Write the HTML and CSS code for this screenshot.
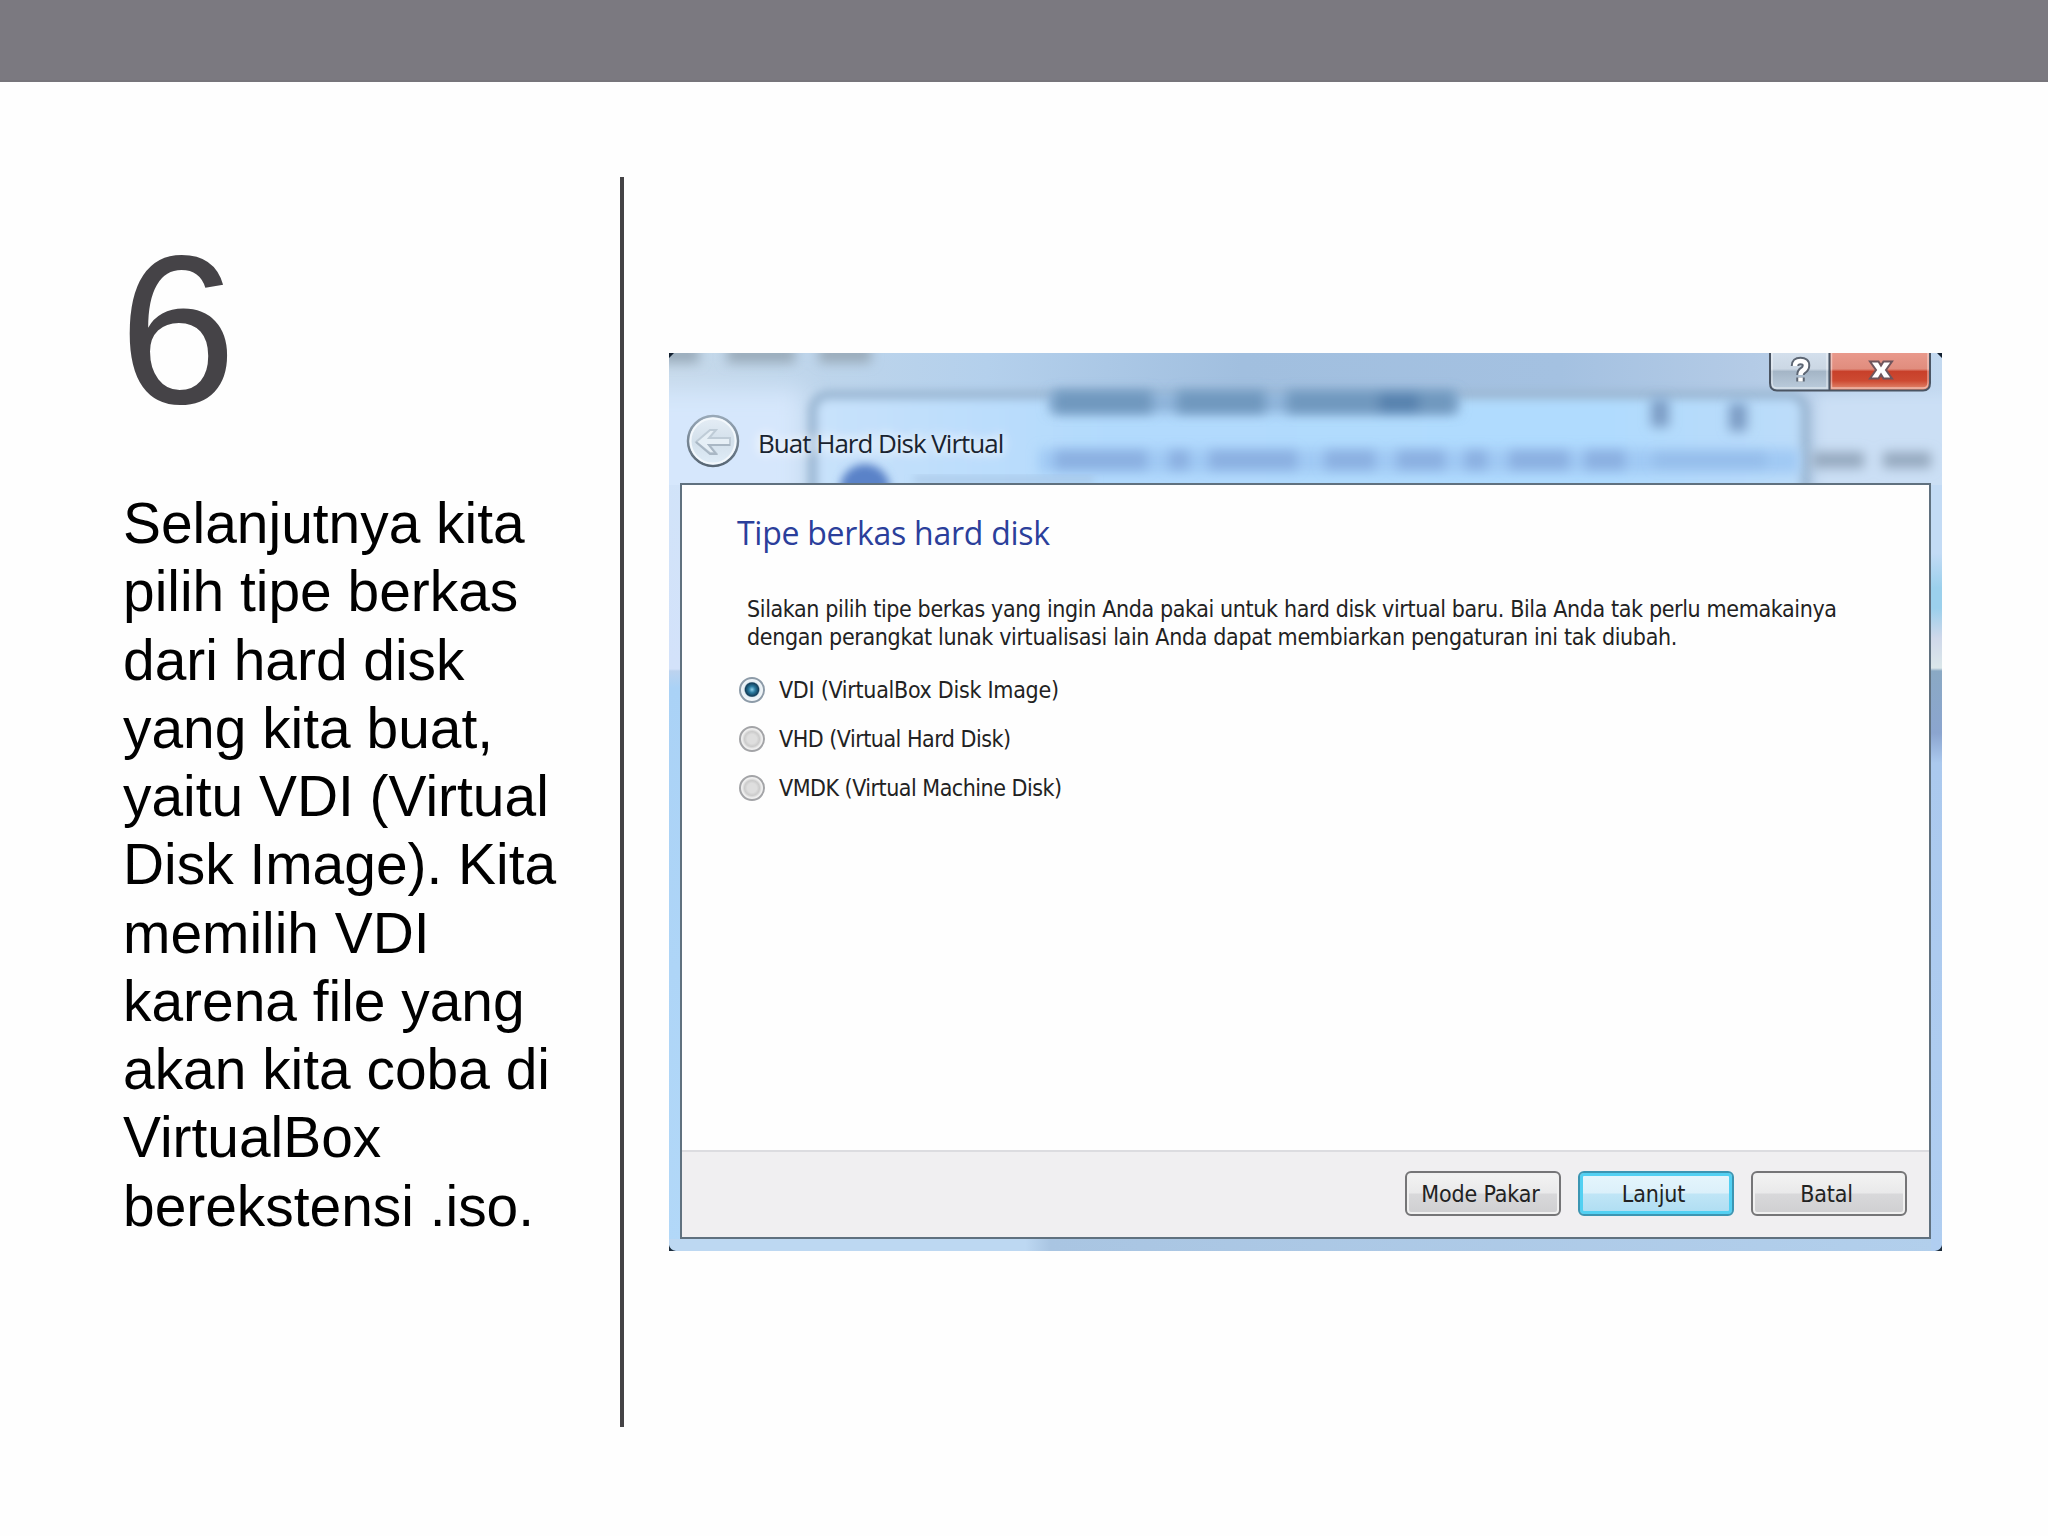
FILE: index.html
```
<!DOCTYPE html>
<html lang="id">
  <head>
    <meta charset="utf-8">
    <meta name="viewport" content="width=device-width, initial-scale=1.0">
    <title>Buat Hard Disk Virtual</title>
    <link rel="stylesheet" href="styles.css">
  </head>
  <body>
    <div class="topbar"></div>
    <div class="slide">
      <div class="text">
        <h1>6</h1>
        <p>Selanjutnya kita pilih tipe berkas dari hard disk yang kita buat, yaitu VDI (Virtual Disk Image). Kita memilih VDI karena file yang akan kita coba di VirtualBox berekstensi .iso.</p>
      </div>
      <div class="line"></div>
      <div class="window">
        <!-- aero glass with the blurred window behind it -->
        <svg class="glass" viewBox="0 0 1273 132" width="1273" height="132">
          <defs>
            <linearGradient id="base" x1="0" x2="1" y1="0" y2="0">
              <stop offset="0" stop-color="#c6d9ea"/>
              <stop offset=".25" stop-color="#b4d0ec"/>
              <stop offset=".45" stop-color="#a1bfdf"/>
              <stop offset=".7" stop-color="#a4c1e1"/>
              <stop offset=".85" stop-color="#b4cbe6"/>
              <stop offset="1" stop-color="#c3d9f0"/>
            </linearGradient>
            <linearGradient id="inner" x1="0" x2="1" y1="0" y2="0">
              <stop offset="0" stop-color="#c8e2fb"/>
              <stop offset=".3" stop-color="#b2dafd"/>
              <stop offset=".8" stop-color="#b0dbfe"/>
              <stop offset="1" stop-color="#bcdcf9"/>
            </linearGradient>
            <filter id="b4" x="-20%" y="-50%" width="140%" height="200%"><feGaussianBlur stdDeviation="4"/></filter>
            <filter id="b6" x="-50%" y="-150%" width="200%" height="400%"><feGaussianBlur stdDeviation="6"/></filter>
            <filter id="b12" x="-50%" y="-50%" width="200%" height="200%"><feGaussianBlur stdDeviation="12"/></filter>
          </defs>
          <rect width="1273" height="132" fill="url(#base)"/>
          <rect x="-30" y="36" width="165" height="130" fill="#d6e7fc" filter="url(#b12)"/>
          <rect x="1148" y="42" width="160" height="110" fill="#cbdff5" filter="url(#b6)"/>
          <g fill="#9aabba" filter="url(#b6)">
            <rect x="-10" y="-8" width="40" height="18"/>
            <rect x="58" y="-8" width="68" height="18"/>
            <rect x="150" y="-8" width="52" height="18"/>
          </g>
          <rect x="144" y="42" width="992" height="130" rx="16" fill="url(#inner)" stroke="#9db9d5" stroke-width="10" filter="url(#b4)"/>
          <path d="M1137 50V140" stroke="#94abc4" stroke-width="12" filter="url(#b4)"/>
          <rect x="380" y="40" width="410" height="20" fill="#8db3d9" filter="url(#b6)"/>
          <g fill="#7097bd" filter="url(#b6)">
            <rect x="385" y="38" width="98" height="22"/>
            <rect x="508" y="38" width="88" height="22"/>
            <rect x="618" y="38" width="168" height="22"/>
            <rect x="710" y="40" width="40" height="20" fill="#5781ad"/>
          </g>
          <rect x="370" y="96" width="760" height="24" fill="#a0c9f4" filter="url(#b6)"/>
          <g fill="#8aafe0" filter="url(#b6)">
            <rect x="386" y="98" width="92" height="18"/>
            <rect x="500" y="98" width="20" height="18"/>
            <rect x="540" y="98" width="88" height="18"/>
            <rect x="656" y="98" width="50" height="18"/>
            <rect x="728" y="98" width="48" height="18"/>
            <rect x="796" y="98" width="22" height="18"/>
            <rect x="840" y="98" width="60" height="18"/>
            <rect x="916" y="98" width="40" height="18"/>
            <rect x="985" y="100" width="112" height="14" opacity=".5"/>
          </g>
          <g fill="#94a8be" filter="url(#b6)">
            <rect x="1143" y="99" width="52" height="16"/>
            <rect x="1214" y="99" width="48" height="16"/>
          </g>
          <g fill="#7b9cc4" filter="url(#b6)">
            <rect x="982" y="46" width="18" height="28"/>
            <rect x="1060" y="50" width="18" height="28"/>
          </g>
          <circle cx="196" cy="136" r="25" fill="#5a82c8" filter="url(#b4)"/>
          <rect x="245" y="124" width="180" height="5" fill="#a3c0e0" filter="url(#b4)"/>
          <path d="M0 0h5L0 5zM1273 0h-5l5 5z" fill="#122030"/>
        </svg>
        <div class="caption">
          <svg width="162" height="39" viewBox="0 0 162 39">
            <defs>
              <linearGradient id="help" x1="0" x2="0" y1="0" y2="1">
                <stop offset="0" stop-color="#d3dfec"/>
                <stop offset=".43" stop-color="#cbd7e4"/>
                <stop offset=".5" stop-color="#a4b5c6"/>
                <stop offset="1" stop-color="#bccddd"/>
              </linearGradient>
              <linearGradient id="close" x1="0" x2="0" y1="0" y2="1">
                <stop offset="0" stop-color="#e9998c"/>
                <stop offset=".43" stop-color="#e08d7e"/>
                <stop offset=".5" stop-color="#c8402a"/>
                <stop offset=".75" stop-color="#cd4a32"/>
                <stop offset="1" stop-color="#e58f74"/>
              </linearGradient>
            </defs>
            <path d="M1 0V30Q1 37 8 37H60V0z" fill="url(#help)"/>
            <path d="M60 0V37H154Q161 37 161 30V0z" fill="url(#close)"/>
            <path d="M3 0V30Q3 35 8 35H58V0M62.500 0V35H154Q159 35 159 30V0" fill="none" stroke="#fff" stroke-opacity=".45" stroke-width="1.500"/>
            <path d="M1 0V30Q1 37.500 8 37.500H154Q161 37.500 161 30V0M60.500 0V37" fill="none" stroke="#4b5563" stroke-width="2"/>
            <path d="M26 13Q26 8 31.500 8T37 12.500Q37 15.500 34 17.500Q31.500 19 31.500 22M31.500 24.500V28.500" fill="none" stroke="#5d6673" stroke-width="8.500"/>
            <path d="M26 13Q26 8 31.500 8T37 12.500Q37 15.500 34 17.500Q31.500 19 31.500 22M31.500 24.500V28.500" fill="none" stroke="#fff" stroke-width="4.500"/>
            <path d="M101 8.500h8.500l2.500 4 2.500-4h8.500l-6 8.500 6 8.500h-8.500l-2.500-4-2.500 4h-8.500l6-8.500z" fill="#fff" stroke="#6f555c" stroke-width="2"/>
          </svg>
        </div>
        <div class="title">
          <svg width="56" height="56" viewBox="0 0 56 56">
            <defs>
              <linearGradient id="back" x1="0" x2="0" y1="0" y2="1">
                <stop offset="0" stop-color="#e6eef6"/>
                <stop offset=".5" stop-color="#d3e0eb"/>
                <stop offset="1" stop-color="#e0edf8"/>
              </linearGradient>
              <linearGradient id="ring" x1="0" x2="0" y1="0" y2="1">
                <stop offset="0" stop-color="#98a8b7"/>
                <stop offset="1" stop-color="#586673"/>
              </linearGradient>
            </defs>
            <circle cx="28" cy="28" r="25" fill="url(#back)" stroke="url(#ring)" stroke-width="2.500"/>
            <circle cx="28" cy="28" r="22.500" fill="none" stroke="#f3f8fc" stroke-width="2"/>
            <path d="M11 29L25 17h6l-7 8h21v7H24l7 8h-6z" fill="#e6eff6" stroke="#bfccd7" stroke-width="2"/>
            <path d="M11 29L25 41h6l-7-9h21" fill="none" stroke="#a9b7c4" stroke-width="2"/>
          </svg>
          <span>Buat Hard Disk Virtual</span>
        </div>
        <div class="panel">
          <div class="content">
            <h2>Tipe berkas hard disk</h2>
            <p><span class="l1">Silakan pilih tipe berkas yang ingin Anda pakai untuk hard disk virtual baru. Bila Anda tak perlu memakainya</span><br><span class="l2">dengan perangkat lunak virtualisasi lain Anda dapat membiarkan pengaturan ini tak diubah.</span></p>
            <div class="options">
              <div class="option selected"><i class="radio checked"></i><span>VDI (VirtualBox Disk Image)</span></div>
              <div class="option"><i class="radio"></i><span>VHD (Virtual Hard Disk)</span></div>
              <div class="option"><i class="radio"></i><span>VMDK (Virtual Machine Disk)</span></div>
            </div>
          </div>
          <div class="buttons">
            <button>Mode Pakar</button>
            <button class="default">Lanjut</button>
            <button>Batal</button>
          </div>
        </div>
        <svg class="corners" viewBox="0 0 1273 6" width="1273" height="6">
          <path d="M0 0Q1 5 7 6H0zM1273 0Q1272 5 1266 6h7z" fill="#1c2c3c"/>
        </svg>
      </div>
    </div>
  </body>
</html>
```
FILE: styles.css
```
* {
  box-sizing: border-box;
}
body {
  margin: 0;
  height: 1536px;
  overflow: hidden;
  background-color: #fefefe;
  font-family: "Liberation Sans", Arial, sans-serif;
}
.topbar {
  height: 82px;
  background-color: #7b7980;
  border-bottom: 2px solid #77757b;
}
.slide {
  display: flex;
  align-items: flex-start;
  padding: 95px 0 0 123px;
}
/* left column */
.text {
  width: 497px;
  padding: 35px 50px 0 0;
}
.text h1 {
  margin: 0 0 0 -4px;
  font-size: 211px;
  font-weight: normal;
  line-height: 236px;
  color: #454347;
}
.text p {
  margin: 41px 0 0;
  font-size: 56.9px;
  line-height: 68.27px;
  color: #000;
}
.line {
  width: 4px;
  height: 1250px;
  background-color: #444345;
}
/* dialog */
.window {
  position: relative;
  width: 1273px;
  height: 898px;
  margin: 176px 0 0 45px;
  padding: 0 11px 12px 11px;
  background:
    linear-gradient(#c3dbf5 0 200px, #9bd0ec 235px, #9bd0ec 255px, #cfd8ea 285px, #dbe7ea 315px, #8aa9c4 318px, #8ba5cf 380px, #abc9ee 410px, #b0cef1) right / 11px 100% no-repeat,
    linear-gradient(90deg, #bdd8f2, #bdd8f2 28%, #a9c5e2 30%, #b2cfec) bottom / 100% 12px no-repeat,
    linear-gradient(#d0e4f8, #d3e2fa 316px, #bcd3ef 318px, #aad2f6 335px, #b2d8f8);
  display: flex;
  flex-direction: column;
}
.glass {
  position: absolute;
  left: 0;
  top: 0;
}
.corners {
  position: absolute;
  left: 0;
  bottom: 0;
}
.caption {
  position: relative;
  height: 39px;
  display: flex;
  justify-content: flex-end;
}
.title {
  position: relative;
  height: 91px;
  padding: 21px 0 0 5px;
  display: flex;
  align-items: flex-start;
  font-family: "Open Sans", "Noto Sans", sans-serif;
  font-size: 26px;
  color: #1a2430;
}
.title span {
  margin: 12px 0 0 17px;
  line-height: 36px;
  letter-spacing: -1px;
  text-shadow: 0 0 10px #fff, 0 0 16px #fff;
}
.panel {
  position: relative;
  flex: 1;
  display: flex;
  flex-direction: column;
  border: 2px solid #60717f;
  background-color: #fefefe;
  font-family: "DejaVu Sans Condensed", "DejaVu Sans", sans-serif;
  font-size: 23px;
  color: #222;
}
.content {
  flex: 1;
  padding: 25px 0 0 55px;
}
.content h2 {
  margin: 0;
  font-family: "Open Sans", "Noto Sans", sans-serif;
  font-size: 32px;
  font-weight: normal;
  line-height: 46px;
  letter-spacing: -0.27px;
  color: #2b3f9b;
}
.content p {
  margin: 40px 0 0 10px;
  line-height: 27.5px;
  white-space: nowrap;
}
.l1 {
  letter-spacing: -0.37px;
}
.l2 {
  letter-spacing: -0.34px;
}
.options {
  margin: 14px 0 0 2px;
}
.option {
  display: flex;
  align-items: center;
  gap: 14px;
  height: 49px;
  letter-spacing: -0.5px;
}
.selected {
  letter-spacing: -0.28px;
}
.radio {
  width: 26px;
  height: 26px;
  border: 2px solid #a3a4a7;
  border-radius: 50%;
  background: radial-gradient(#dedede 0 30%, #cbcbcb 48%, #f0f0f0 64%);
}
.radio.checked {
  border-color: #8d9ba8;
  background: radial-gradient(circle at 50% 48%, #8fd0ea 0, #2b7ba0 20%, #123e5a 42%, #e4edf3 50%, #f4f8fb 70%);
}
.buttons {
  height: 87px;
  padding: 19px 22px 0 0;
  display: flex;
  justify-content: flex-end;
  gap: 17px;
  border-top: 2px solid #dcdce0;
  background-color: #f0eff1;
}
.buttons button {
  width: 156px;
  height: 45px;
  padding: 0 5px 0 0;
  border: 2px solid #757577;
  border-radius: 6px;
  background: linear-gradient(#f3f3f3, #e9e9ea 48%, #d8d8da 52%, #cfcfd1);
  box-shadow: inset 0 0 0 2px #f0f0f0;
  font: inherit;
  color: #222;
  letter-spacing: -0.15px;
}
.buttons .default {
  border-color: #3c95b2;
  background: linear-gradient(#e6f6fc, #dbf0fa 48%, #bfe5f6 52%, #aeddf2);
  box-shadow: inset 0 0 0 3px #52d0f2;
}
```
